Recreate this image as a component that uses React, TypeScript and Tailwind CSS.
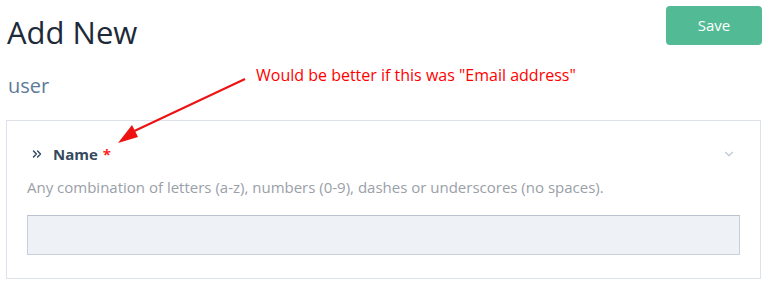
import { ChevronDown, ChevronsRight } from 'lucide-react';

export default function App() {
  return (
    <div className="relative w-[767px] h-[286px] bg-white font-['Open_Sans',sans-serif] text-[#2c3e50]">
      <div className="flex items-start justify-between pl-[7px] pr-[5px] pt-[6px]">
        <h1 className="text-[31px] leading-[44px] font-normal text-[#1e2a38] mt-[4px]">Add New</h1>
        <button className="w-[96px] h-[39px] rounded-[4px] bg-[#52bb96] text-white text-[15px]">Save</button>
      </div>
      <div className="pl-[8px] mt-[18px] text-[20px] leading-[28px] text-[#5e7a99]">user</div>

      <div className="mx-[6px] mt-[20px] border border-[#dde2ea] h-[159px] px-[20px] pt-[22px]">
        <div className="flex items-center justify-between">
          <div className="flex items-center gap-[9px] pl-[3px]">
            <ChevronsRight className="w-[14px] h-[14px] text-[#34495e]" strokeWidth={2.5} />
            <span className="text-[15px] font-bold text-[#34495e]">Name</span>
            <span className="text-[15px] font-bold text-[#ff1f1f] -ml-[4px]">*</span>
          </div>
          <ChevronDown className="w-[14px] h-[14px] text-[#c0c8d2] mr-[4px]" />
        </div>
        <p className="mt-[10px] text-[15px] text-[#9aa0a8] leading-[22px]">
          Any combination of letters (a-z), numbers (0-9), dashes or underscores (no spaces).
        </p>
        <div className="mt-[17px] h-[40px] bg-[#eef1f6] border border-[#c6d0da] border-t-[#b9c3ce]" />
      </div>

      <div className="absolute left-[256px] top-[64px] text-[16px] text-[#ff0000] leading-[22px] font-['Open_Sans',sans-serif]">
        Would be better if this was "Email address"
      </div>
      <svg className="absolute left-0 top-0" width="767" height="286">
        <line x1="245" y1="79" x2="128" y2="134" stroke="#ee1111" strokeWidth="2" />
        <polygon points="118,143 132,125 138,137" fill="#ee1111" />
      </svg>
    </div>
  );
}
